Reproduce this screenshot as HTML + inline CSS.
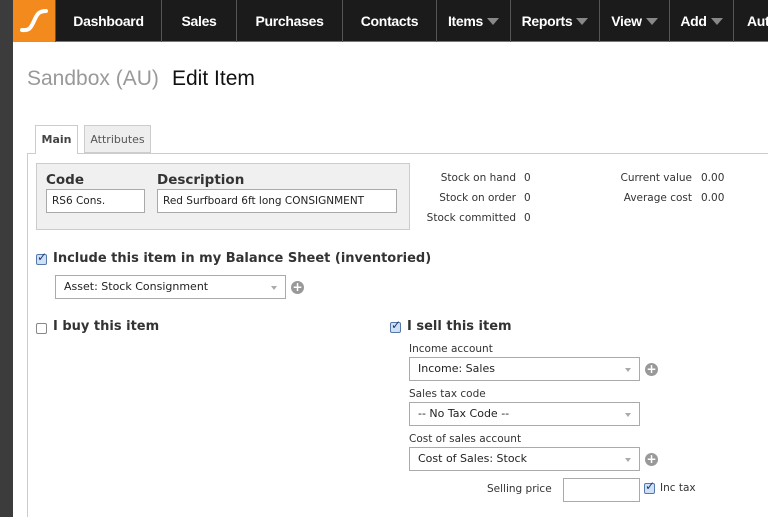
<!DOCTYPE html>
<html><head><style>
*{box-sizing:border-box;margin:0;padding:0}
body{width:768px;height:517px;overflow:hidden;background:#fff;font-family:"DejaVu Sans","Liberation Sans",sans-serif;position:relative;color:#222}
.a{position:absolute}
.nav{left:13px;top:0;width:755px;height:42px;background:#1b1b1b;border-bottom:1px solid #777}
.nav div{position:absolute;top:0;height:42px;line-height:42px;color:#fff;font-family:"Liberation Sans",sans-serif;font-weight:bold;font-size:14px;text-align:center;border-left:1px solid #555;letter-spacing:-0.3px}
.tri{display:inline-block;width:0;height:0;border-left:6px solid transparent;border-right:6px solid transparent;border-top:7px solid #888;margin-left:4px;vertical-align:1px}
.sel{position:absolute;height:24px;border:1px solid #aaa;background:#fff;font-size:11px;line-height:22px;padding-left:8px}
.sel:after{content:"";position:absolute;right:8px;top:10px;border-left:3px solid transparent;border-right:3px solid transparent;border-top:4px solid #aaa}
.plus{position:absolute;width:13px;height:13px;border-radius:50%;background:#999;color:#fff;font-size:12px;line-height:13px;text-align:center;font-weight:bold}
.cb{position:absolute;width:11px;height:11px;border:1px solid #888;border-radius:2px;background:#fff}
.cb.on{background:#cfe0f5;border-color:#5577aa}
.cb.on:after{content:"✓";position:absolute;left:0px;top:-5px;font-size:12px;color:#1a3a7a;font-weight:bold}
.lab{font-size:10.5px;color:#333}
.h{font-size:13px;font-weight:bold;color:#333}
.h2{font-size:13.5px;font-weight:bold;color:#333}
</style></head><body>
<div class="a" style="left:0;top:0;width:13px;height:517px;background:#3c3c3c"></div>
<div class="a nav">
<div style="left:42px;width:106px">Dashboard</div>
<div style="left:148px;width:75px">Sales</div>
<div style="left:223px;width:106px">Purchases</div>
<div style="left:329px;width:94px">Contacts</div>
<div style="left:423px;width:74px">Items<span class="tri"></span></div>
<div style="left:497px;width:89px">Reports<span class="tri"></span></div>
<div style="left:586px;width:70px">View<span class="tri"></span></div>
<div style="left:656px;width:64px">Add<span class="tri"></span></div>
<div style="left:720px;width:50px;text-align:left;padding-left:13px">Auto</div>
</div>
<div class="a" style="left:13px;top:0;width:42px;height:42px;background:#f28a1e">
<svg width="42" height="42"><path d="M9 30 C17 31 18 27 21 21 C24 14 26 11 33 11" stroke="#fff" stroke-width="4" fill="none" stroke-linecap="round"/></svg></div>
<div class="a" style="left:27px;top:67px;font-family:'Liberation Sans',sans-serif;font-size:21px;color:#999">Sandbox (AU)</div>
<div class="a" style="left:172px;top:67px;font-family:'Liberation Sans',sans-serif;font-size:21px;color:#111">Edit Item</div>
<div class="a" style="left:27px;top:153px;width:741px;height:364px;border-top:1px solid #ccc;border-left:1px solid #ccc"></div>
<div class="a" style="left:35px;top:125px;width:43px;height:29px;border:1px solid #ccc;border-bottom:none;background:#fff;font-size:11px;font-weight:bold;color:#444;text-align:center;line-height:28px">Main</div>
<div class="a" style="left:84px;top:125px;width:67px;height:28px;border:1px solid #ccc;background:#eee;font-size:11px;color:#555;text-align:center;line-height:28px">Attributes</div>
<div class="a" style="left:36px;top:163px;width:374px;height:67px;background:#f0f0f0;border:1px solid #ccc"></div>
<div class="a h2" style="left:46px;top:172px">Code</div>
<div class="a h2" style="left:157px;top:172px">Description</div>
<div class="a" style="left:46px;top:189px;width:99px;height:24px;border:1px solid #aaa;background:#fff;font-size:10.5px;line-height:22px;padding-left:5px">RS6 Cons.</div>
<div class="a" style="left:157px;top:189px;width:240px;height:24px;border:1px solid #aaa;background:#fff;font-size:10.5px;line-height:22px;padding-left:5px">Red Surfboard 6ft long CONSIGNMENT</div>
<div class="a lab" style="left:416px;top:172px;width:100px;text-align:right">Stock on hand</div>
<div class="a lab" style="left:416px;top:192px;width:100px;text-align:right">Stock on order</div>
<div class="a lab" style="left:416px;top:212px;width:100px;text-align:right">Stock committed</div>
<div class="a lab" style="left:524px;top:172px">0</div>
<div class="a lab" style="left:524px;top:192px">0</div>
<div class="a lab" style="left:524px;top:212px">0</div>
<div class="a lab" style="left:590px;top:172px;width:102px;text-align:right">Current value</div>
<div class="a lab" style="left:590px;top:192px;width:102px;text-align:right">Average cost</div>
<div class="a lab" style="left:701px;top:172px">0.00</div>
<div class="a lab" style="left:701px;top:192px">0.00</div>
<div class="cb on" style="left:36px;top:254px"></div>
<div class="a h" style="left:53px;top:251px">Include this item in my Balance Sheet (inventoried)</div>
<div class="sel" style="left:55px;top:275px;width:231px">Asset: Stock Consignment</div>
<div class="plus" style="left:291px;top:281px">+</div>
<div class="cb" style="left:36px;top:323px"></div>
<div class="a h" style="left:53px;top:319px">I buy this item</div>
<div class="cb on" style="left:390px;top:322px"></div>
<div class="a h" style="left:407px;top:319px">I sell this item</div>
<div class="a lab" style="left:409px;top:343px">Income account</div>
<div class="sel" style="left:409px;top:357px;width:231px">Income: Sales</div>
<div class="plus" style="left:645px;top:363px">+</div>
<div class="a lab" style="left:409px;top:388px">Sales tax code</div>
<div class="sel" style="left:409px;top:402px;width:231px">-- No Tax Code --</div>
<div class="a lab" style="left:409px;top:433px">Cost of sales account</div>
<div class="sel" style="left:409px;top:447px;width:231px">Cost of Sales: Stock</div>
<div class="plus" style="left:645px;top:453px">+</div>
<div class="a lab" style="left:487px;top:483px">Selling price</div>
<div class="a" style="left:563px;top:478px;width:77px;height:24px;border:1px solid #aaa;background:#fff"></div>
<div class="cb on" style="left:644px;top:483px"></div>
<div class="a lab" style="left:660px;top:482px">Inc tax</div>
</body></html>
